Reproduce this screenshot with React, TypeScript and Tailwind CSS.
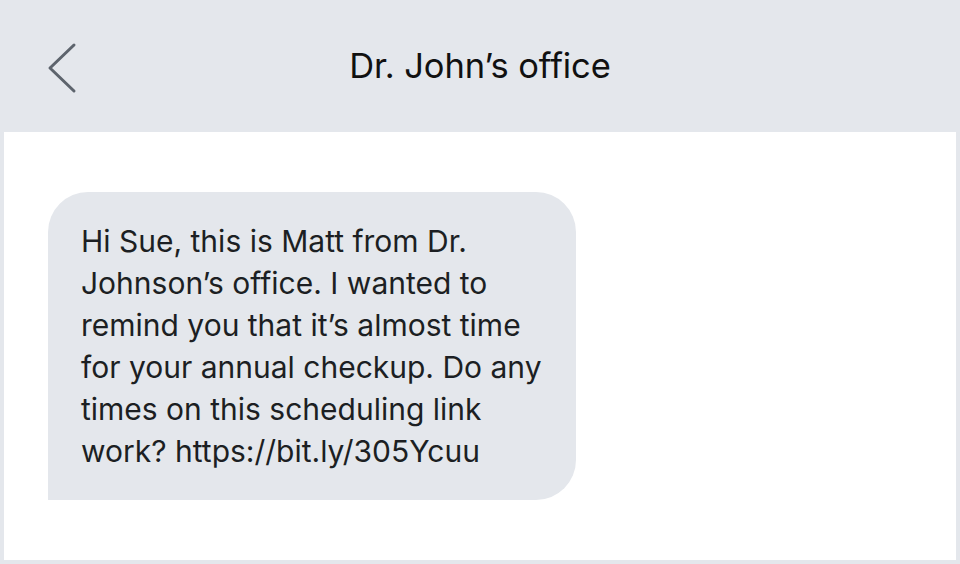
const LINES = [
  "Hi Sue, this is Matt from Dr.",
  "Johnson\u2019s office. I wanted to",
  "remind you that it\u2019s almost time",
  "for your annual checkup. Do any",
  "times on this scheduling link",
  "work? https://bit.ly/305Ycuu",
];

export default function App() {
  return (
    <div className="flex h-[564px] w-[960px] flex-col bg-[#e4e7ec] font-['Inter',sans-serif] text-[#1c1f23]">
      {/* Header */}
      <div className="relative flex h-[132px] shrink-0 items-center justify-center">
        <button className="absolute left-[40px] top-[36px] p-1">
          <svg width="34" height="56" viewBox="0 0 34 56" fill="none">
            <path d="M30 5 L6 28 L30 51" stroke="#5d646d" strokeWidth="3" strokeLinecap="round" strokeLinejoin="round" />
          </svg>
        </button>
        <h1 className="text-[34.5px] font-normal tracking-[-0.1px] text-[#111]">Dr. John’s office</h1>
      </div>

      {/* Conversation */}
      <div className="mx-[4px] mb-[4px] flex-1 bg-white px-[44px] pt-[60px]">
        <div className="w-[528px] rounded-[40px] rounded-bl-none bg-[#e4e7ec] pb-[28px] pl-[33px] pr-[20px] pt-[28px] text-[30px] leading-[42px]">
          {LINES.map((l) => (
            <div key={l} className="whitespace-nowrap">{l}</div>
          ))}
        </div>
      </div>
    </div>
  );
}
